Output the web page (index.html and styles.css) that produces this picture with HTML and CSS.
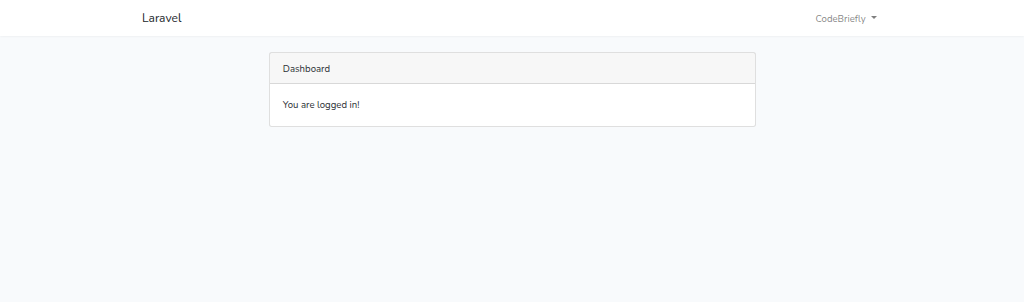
FILE: index.html
```html
<!DOCTYPE html>
<html lang="en">
<head>
<meta charset="utf-8">
<title>Laravel</title>
<link rel="stylesheet" href="styles.css">
</head>
<body>
<div class="app">
  <nav class="navbar">
    <div class="container nav-inner">
      <a class="brand" href="#">Laravel</a>
      <ul class="nav-right">
        <li><a class="nav-link" href="#">CodeBriefly <span class="caret"></span></a></li>
      </ul>
    </div>
  </nav>
  <main class="main">
    <div class="container">
      <div class="row">
        <div class="card">
          <div class="card-header">Dashboard</div>
          <div class="card-body">You are logged in!</div>
        </div>
      </div>
    </div>
  </main>
</div>
</body>
</html>
```

FILE: styles.css
```css
* { box-sizing: border-box; }
html, body { margin: 0; padding: 0; }
body {
  background: #f8fafc;
  font-family: Nunito, Lato, "Open Sans", sans-serif;
  font-size: 9.6px;
  line-height: 15px;
  color: #2a2e33;
  height: 302px;
}
a { text-decoration: none; }
.container {
  width: 760px;
  margin: 0 auto;
  padding: 0 10px;
}
.navbar {
  background: #fff;
  box-shadow: 0 1.3px 2.7px rgba(0,0,0,.075);
  padding: 5px 0;
  height: 36px;
}
.nav-inner {
  display: flex;
  align-items: center;
  justify-content: space-between;
  height: 26px;
}
.brand {
  font-size: 12px;
  line-height: 20px;
  margin-top: -1px;
  color: #212529;
}
.nav-right {
  list-style: none;
  margin: 0;
  padding: 0;
  display: flex;
}
.nav-link {
  display: flex;
  align-items: center;
  padding: 5px 5.3px;
  color: rgba(0,0,0,.5);
}
.caret {
  display: inline-block;
  margin-left: 5px;
  width: 0;
  height: 0;
  border-top: 3.2px solid rgba(0,0,0,.5);
  border-left: 3.2px solid transparent;
  border-right: 3.2px solid transparent;
  margin-top: -1px;
}
.main {
  padding: 16px 0;
}
.row {
  display: flex;
  justify-content: center;
}
.card {
  width: 487px;
  background: #fff;
  border: 1px solid rgba(0,0,0,.125);
  border-radius: 2.7px;
}
.card-header {
  padding: 8px 13.3px 7px;
  background: rgba(0,0,0,.03);
  border-bottom: 1px solid rgba(0,0,0,.125);
}
.card-body {
  padding: 13px 13.3px 14px;
}
```
